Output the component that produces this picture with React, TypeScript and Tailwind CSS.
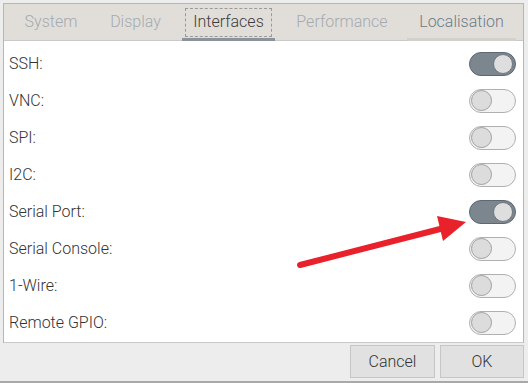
import React from "react";

const rows: { label: string; on: boolean }[] = [
  { label: "SSH:", on: true },
  { label: "VNC:", on: false },
  { label: "SPI:", on: false },
  { label: "I2C:", on: false },
  { label: "Serial Port:", on: true },
  { label: "Serial Console:", on: false },
  { label: "1-Wire:", on: false },
  { label: "Remote GPIO:", on: false },
];

function Switch({ on }: { on: boolean }) {
  if (on) {
    return (
      <div className="w-[47px] h-[24px] rounded-full bg-[#7c868f] border border-[#5f6870] flex items-center justify-end pr-[2px]">
        <div className="w-[20px] h-[20px] rounded-full bg-[#dedede] border border-[#6d767e]" />
      </div>
    );
  }
  return (
    <div className="w-[47px] h-[24px] rounded-full bg-[#f3f3f3] border border-[#b0b0b0] flex items-center pl-[1px]">
      <div className="w-[21px] h-[21px] rounded-full bg-[#dcdcdc] border border-[#a0a0a0]" />
    </div>
  );
}

export default function App() {
  const tabs = [
    { name: "System", w: "w-[78px]", ml: "ml-[8px]", cls: "text-[#a4aaaf]" },
    { name: "Display", w: "w-[75px]", ml: "ml-[8px]", cls: "text-[#a4aaaf]" },
    { name: "Interfaces", w: "w-[93px]", ml: "ml-[9px]", cls: "text-[#3c3c3c]" },
    { name: "Performance", w: "w-[114px]", ml: "ml-[10px]", cls: "text-[#a4aaaf]" },
    { name: "Localisation", w: "w-[109px]", ml: "ml-[8px]", cls: "text-[#6f7a85]" },
  ];
  return (
    <div
      className="relative w-[528px] h-[383px] bg-[#ededed] overflow-hidden font-light"
      style={{ fontFamily: "Roboto, 'Liberation Sans', sans-serif" }}
    >
      <div className="pt-[3px] pl-[3px] w-[525px]">
        <div className="w-[521px] border-t border-l border-r border-[#b8b6b2]">
          {/* Tab bar */}
          <div className="h-[36px] bg-[#e1deda] flex items-stretch">
            {tabs.map((t) => (
              <div
                key={t.name}
                className={`${t.w} ${t.ml} relative flex items-center justify-center text-[16px] ${t.cls}`}
              >
                {t.name === "Interfaces" && (
                  <>
                    <div className="absolute left-[3px] right-[3px] top-[4px] bottom-[3px] border border-dashed border-[#9a9a9a]" />
                    <div className="absolute left-0 right-0 bottom-[-1px] h-[3px] bg-[#8a939c]" />
                  </>
                )}
                {t.name === "Localisation" && (
                  <div className="absolute left-0 right-0 bottom-[-1px] h-[3px] bg-[#d3cfca]" />
                )}
                <span className="relative">{t.name}</span>
              </div>
            ))}
          </div>
          {/* Content */}
          <div className="bg-white border-t border-b border-[#c9c9c9] h-[303px] pt-[4px]">
            {rows.map((r) => (
              <div key={r.label} className="h-[37px] flex items-center justify-between pl-[5px] pr-[7px]">
                <span className="text-[16px] text-[#333333]">{r.label}</span>
                <Switch on={r.on} />
              </div>
            ))}
          </div>
        </div>
        {/* Buttons */}
        <div className="flex justify-end gap-[5px] pt-[2px] pr-[0px] w-[521px]">
          <button className="w-[85px] h-[33px] bg-[#e1e1e1] border border-[#c6c6c6] text-[16px] text-[#333333]">
            Cancel
          </button>
          <button className="w-[84px] h-[33px] bg-[#e1e1e1] border border-[#c6c6c6] text-[16px] text-[#333333]">
            OK
          </button>
        </div>
      </div>
      <div className="absolute left-0 right-0 bottom-0 h-[2px] bg-[#a9a9a9]" />
      {/* red arrow */}
      <svg className="absolute left-0 top-0" width="528" height="383" viewBox="0 0 528 383">
        <line x1="300" y1="265" x2="448" y2="227" stroke="#e8212a" strokeWidth="6" strokeLinecap="round" />
        <polygon points="466,222 437,216 443,241" fill="#e8212a" />
      </svg>
    </div>
  );
}
